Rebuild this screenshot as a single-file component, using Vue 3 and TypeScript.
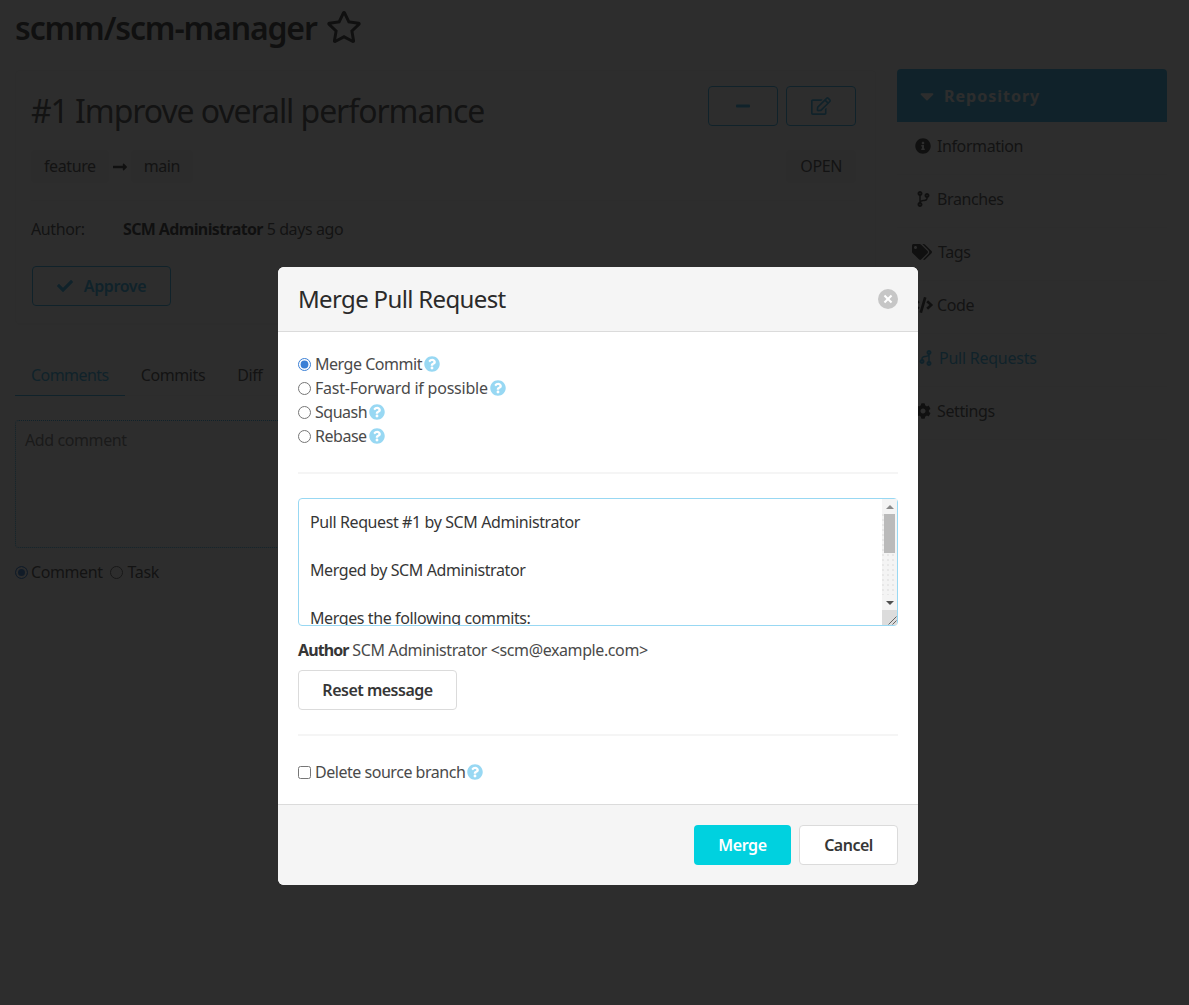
<script setup lang="ts">
const icons: Record<string, [number, string]> = {
  star: [576, "M528.1 171.5L382 150.2 316.7 17.8c-11.7-23.6-45.6-23.9-57.4 0L194 150.2 47.9 171.5c-26.2 3.8-36.7 36.1-17.7 54.6l105.7 103-25 145.5c-4.5 26.3 23.2 46 46.4 33.7L288 439.6l130.7 68.7c23.2 12.2 50.9-7.4 46.4-33.7l-25-145.5 105.7-103c19-18.5 8.5-50.8-17.7-54.6zM388.6 312.3l23.7 138.4L288 385.4l-124.3 65.3 23.7-138.4-100.6-98 139-20.2 62.2-126 62.2 126 139 20.2-100.6 98z"],
  check: [512, "M173.898 439.404l-166.4-166.4c-9.997-9.997-9.997-26.206 0-36.204l36.203-36.204c9.997-9.998 26.207-9.998 36.204 0L192 312.69 432.095 72.596c9.997-9.997 26.207-9.997 36.204 0l36.203 36.204c9.997 9.997 9.997 26.206 0 36.204l-294.4 294.401c-9.998 9.997-26.207 9.997-36.204-.001z"],
  minus: [448, "M416 208H32c-17.67 0-32 14.33-32 32v32c0 17.67 14.33 32 32 32h384c17.67 0 32-14.33 32-32v-32c0-17.67-14.33-32-32-32z"],
  edit: [576, "M402.3 344.9l32-32c5-5 13.7-1.5 13.7 5.7V464c0 26.5-21.5 48-48 48H48c-26.5 0-48-21.5-48-48V112c0-26.5 21.5-48 48-48h273.5c7.1 0 10.7 8.6 5.7 13.7l-32 32c-1.5 1.5-3.5 2.3-5.7 2.3H48v352h352V350.5c0-2.1.8-4.1 2.3-5.6zm156.6-201.8L296.3 405.7l-90.4 10c-26.2 2.9-48.5-19.2-45.6-45.6l10-90.4L432.9 17.1c22.9-22.9 59.9-22.9 82.7 0l43.2 43.2c22.9 22.9 22.9 60 .1 82.8zM460.1 174L402 115.9 216.2 301.8l-7.3 65.3 65.3-7.3L460.1 174zm64.8-79.7l-43.2-43.2c-4.1-4.1-10.8-4.1-14.8 0L436 82l58.1 58.1 30.9-30.9c4-4.2 4-10.8-.1-14.9z"],
  caret: [320, "M31.3 192h257.3c17.8 0 26.7 21.5 14.1 34.1L174.1 354.8c-7.8 7.8-20.5 7.8-28.3 0L17.2 226.1C4.6 213.5 13.5 192 31.3 192z"],
  info: [512, "M256 8C119.043 8 8 119.083 8 256c0 136.997 111.043 248 248 248s248-111.003 248-248C504 119.083 392.957 8 256 8zm0 110c23.196 0 42 18.804 42 42s-18.804 42-42 42-42-18.804-42-42 18.804-42 42-42zm56 254c0 6.627-5.373 12-12 12h-88c-6.627 0-12-5.373-12-12v-24c0-6.627 5.373-12 12-12h12v-64h-12c-6.627 0-12-5.373-12-12v-24c0-6.627 5.373-12 12-12h64c6.627 0 12 5.373 12 12v100h12c6.627 0 12 5.373 12 12v24z"],
  branch: [384, "M384 144c0-44.2-35.8-80-80-80s-80 35.8-80 80c0 36.4 24.3 67.1 57.5 76.8-.6 16.1-4.2 28.5-11 36.9-15.4 19.2-49.3 22.4-85.2 25.7-28.2 2.6-57.4 5.4-81.3 16.9v-144c32.5-10.2 56-40.5 56-76.3 0-44.2-35.8-80-80-80S0 35.8 0 80c0 35.8 23.5 66.1 56 76.3v199.3C23.5 365.9 0 396.2 0 432c0 44.2 35.8 80 80 80s80-35.8 80-80c0-34-21.2-63.1-51.2-74.6 3.1-5.2 7.8-9.8 14.9-13.4 16.2-8.2 40.4-10.4 66.1-12.8 42.2-3.9 90-8.4 118.2-43.4 14-17.4 21.1-39.8 21.6-67.9 31.6-10.8 54.4-40.7 54.4-75.9zM80 64c8.8 0 16 7.2 16 16s-7.2 16-16 16-16-7.2-16-16 7.2-16 16-16zm0 384c-8.8 0-16-7.2-16-16s7.2-16 16-16 16 7.2 16 16-7.2 16-16 16zm224-320c8.8 0 16 7.2 16 16s-7.2 16-16 16-16-7.2-16-16 7.2-16 16-16z"],
  tags: [640, "M497.941 225.941L286.059 14.059A48 48 0 0 0 252.118 0H48C21.49 0 0 21.49 0 48v204.118a48 48 0 0 0 14.059 33.941l211.882 211.882c18.744 18.745 49.136 18.746 67.882 0l204.118-204.118c18.745-18.745 18.745-49.137 0-67.882zM112 160c-26.51 0-48-21.49-48-48s21.49-48 48-48 48 21.49 48 48-21.49 48-48 48zm513.941 133.823L421.823 497.941c-18.745 18.745-49.137 18.745-67.882 0l-.36-.36L527.64 323.522c16.999-16.999 26.36-39.6 26.36-63.64s-9.362-46.641-26.36-63.64L331.397 0h48.721a48 48 0 0 1 33.941 14.059l211.882 211.882c18.745 18.745 18.745 49.137 0 67.882z"],
  code: [640, "M278.9 511.5l-61-17.7c-6.4-1.8-10-8.5-8.2-14.9L346.2 8.7c1.8-6.4 8.5-10 14.9-8.2l61 17.7c6.4 1.8 10 8.5 8.2 14.9L293.8 503.3c-1.9 6.4-8.5 10.1-14.9 8.2zm-114-112.2l43.5-46.4c4.6-4.9 4.3-12.7-.8-17.2L117 256l90.6-79.7c5.1-4.5 5.5-12.3.8-17.2l-43.5-46.4c-4.5-4.8-12.1-5.1-17-.5L3.8 247.2c-5.1 4.7-5.1 12.8 0 17.5l144.1 135.1c4.9 4.6 12.5 4.4 17-.5zm327.2.6l144.1-135.1c5.1-4.7 5.1-12.8 0-17.5L492.1 112.1c-4.8-4.5-12.4-4.3-17 .5L431.6 159c-4.6 4.9-4.3 12.7.8 17.2L523 256l-90.6 79.7c-5.1 4.5-5.5 12.3-.8 17.2l43.5 46.4c4.5 4.9 12.1 5.1 17 .6z"],
  cog: [512, "M487.4 315.7l-42.6-24.6c4.3-23.2 4.3-47 0-70.2l42.6-24.6c4.9-2.8 7.1-8.6 5.5-14-11.1-35.6-30-67.8-54.7-94.6-3.8-4.1-10-5.1-14.8-2.3L380.8 110c-17.9-15.4-38.5-27.3-60.8-35.1V25.8c0-5.6-3.9-10.5-9.4-11.7-36.7-8.2-74.3-7.8-109.2 0-5.5 1.2-9.4 6.1-9.4 11.7V75c-22.2 7.9-42.8 19.8-60.8 35.1L88.7 85.5c-4.9-2.8-11-1.9-14.8 2.3-24.7 26.7-43.6 58.9-54.7 94.6-1.7 5.4.6 11.2 5.5 14L67.3 221c-4.3 23.2-4.3 47 0 70.2l-42.6 24.6c-4.9 2.8-7.1 8.6-5.5 14 11.1 35.6 30 67.8 54.7 94.6 3.8 4.1 10 5.1 14.8 2.3l42.6-24.6c17.9 15.4 38.5 27.3 60.8 35.1v49.2c0 5.6 3.9 10.5 9.4 11.7 36.7 8.2 74.3 7.8 109.2 0 5.5-1.2 9.4-6.1 9.4-11.7v-49.2c22.2-7.9 42.8-19.8 60.8-35.1l42.6 24.6c4.9 2.8 11 1.9 14.8-2.3 24.7-26.7 43.6-58.9 54.7-94.6 1.5-5.5-.7-11.3-5.6-14.1zM256 336c-44.1 0-80-35.9-80-80s35.9-80 80-80 80 35.9 80 80-35.9 80-80 80z"],
  help: [512, "M504 256c0 136.997-111.043 248-248 248S8 392.997 8 256C8 119.083 119.043 8 256 8s248 111.083 248 248zM262.655 90c-54.497 0-89.255 22.957-116.549 63.758-3.536 5.286-2.353 12.415 2.715 16.258l34.699 26.31c5.205 3.947 12.621 3.008 16.665-2.122 17.864-22.658 30.113-35.797 57.303-35.797 20.429 0 45.698 13.148 45.698 32.958 0 14.976-12.363 22.667-32.534 33.976C247.128 238.528 216 254.941 216 296v4c0 6.627 5.373 12 12 12h56c6.627 0 12-5.373 12-12v-1.333c0-28.462 83.186-29.647 83.186-106.667 0-58.002-60.165-102-116.531-102zM256 338c-25.365 0-46 20.635-46 46 0 25.364 20.635 46 46 46s46-20.636 46-46c0-25.365-20.635-46-46-46z"],
  arrow: [448, "M313.941 216H12c-6.627 0-12 5.373-12 12v56c0 6.627 5.373 12 12 12h301.941v46.059c0 21.382 25.851 32.09 40.971 16.971l86.059-86.059c9.373-9.373 9.373-24.569 0-33.941l-86.059-86.059c-15.119-15.119-40.971-4.411-40.971 16.971V216z"],
};

const navItems = [
  { label: "Information", icon: "info", cls: "" },
  { label: "Branches", icon: "branch", cls: "" },
  { label: "Tags", icon: "tags", cls: "" },
  { label: "Code", icon: "code", cls: "" },
  { label: "Pull Requests", icon: "branch", cls: "nav-active" },
  { label: "Settings", icon: "cog", cls: "" },
];
const strategies = ["Merge Commit", "Fast-Forward if possible", "Squash", "Rebase"];
const message = "Pull Request #1 by SCM Administrator\n\nMerged by SCM Administrator\n\nMerges the following commits:\n\ncommit 1\ncommit 2\ncommit 3\ncommit 4\n";
</script>

<template>
  <div class="page">
    <h1 class="repo-title">
      <span>scmm/scm-manager</span>
      <svg class="star" :viewBox="`0 0 ${icons.star[0]} 512`"><path :d="icons.star[1]" /></svg>
    </h1>
    <div class="columns">
      <main class="main">
        <section class="card">
          <div class="card-top">
            <h2 class="pr-title">#1 Improve overall performance</h2>
            <div class="icon-buttons">
              <button class="outline icon-btn"><svg class="ic16" :viewBox="`0 0 ${icons.minus[0]} 512`"><path :d="icons.minus[1]" /></svg></button>
              <button class="outline icon-btn"><svg class="ic18" :viewBox="`0 0 ${icons.edit[0]} 512`"><path :d="icons.edit[1]" /></svg></button>
            </div>
          </div>
          <div class="branch-row">
            <span class="tag">feature</span>
            <svg class="arrow" :viewBox="`0 0 ${icons.arrow[0]} 512`"><path :d="icons.arrow[1]" /></svg>
            <span class="tag">main</span>
            <span class="tag open">OPEN</span>
          </div>
          <div class="author-row">
            <span class="author-label">Author:</span>
            <span><strong>SCM Administrator</strong> 5 days ago</span>
          </div>
          <button class="outline approve">
            <svg class="ic16" :viewBox="`0 0 ${icons.check[0]} 512`"><path :d="icons.check[1]" /></svg>
            <span>Approve</span>
          </button>
        </section>
        <nav class="tabs">
          <span class="tab active">Comments</span>
          <span class="tab">Commits</span>
          <span class="tab">Diff</span>
        </nav>
        <div class="comment-box">Add comment</div>
        <div class="comment-type">
          <label><span class="bg-radio checked"></span>Comment</label>
          <label><span class="bg-radio"></span>Task</label>
        </div>
      </main>
      <aside class="side">
        <div class="side-head">
          <svg class="caret" :viewBox="`0 0 ${icons.caret[0]} 512`"><path :d="icons.caret[1]" /></svg>
          <span>Repository</span>
        </div>
        <div v-for="item in navItems" :key="item.label" class="side-item" :class="item.cls">
          <svg class="side-ic" :class="`ic-${item.icon}`" :viewBox="`0 0 ${icons[item.icon][0]} 512`"><path :d="icons[item.icon][1]" /></svg>
          <span>{{ item.label }}</span>
        </div>
      </aside>
    </div>

    <div class="overlay">
      <div class="modal">
        <header class="modal-head">
          <p class="modal-title">Merge Pull Request</p>
          <button class="close" aria-label="close"></button>
        </header>
        <div class="modal-body">
          <div class="strategies">
            <label v-for="(s, i) in strategies" :key="s" class="opt">
              <input type="radio" name="strategy" :checked="i === 0" />
              <span class="opt-text">{{ s }}</span>
              <svg class="help" viewBox="0 0 512 512"><path :d="icons.help[1]" /></svg>
            </label>
          </div>
          <hr class="rule first" />
          <div class="msg-wrap">
            <textarea class="msg" :value="message" readonly></textarea>
            <div class="fake-scroll">
              <div class="arrow-btn"><span class="tri up"></span></div>
              <div class="track"><div class="thumb"></div></div>
              <div class="arrow-btn"><span class="tri down"></span></div>
              <div class="grip">
                <svg viewBox="0 0 15 15" class="grip-lines"><path d="M6.5 14.5l8-8M10.5 14.5l4-4" /></svg>
              </div>
            </div>
          </div>
          <div class="author-line"><strong>Author</strong> SCM Administrator &lt;scm@example.com&gt;</div>
          <button class="plain reset">Reset message</button>
          <hr class="rule second" />
          <label class="opt">
            <input type="checkbox" />
            <span class="opt-text">Delete source branch</span>
            <svg class="help" viewBox="0 0 512 512"><path :d="icons.help[1]" /></svg>
          </label>
        </div>
        <footer class="modal-foot">
          <button class="merge">Merge</button>
          <button class="plain cancel">Cancel</button>
        </footer>
      </div>
    </div>
  </div>
</template>

<style>
html, body { margin: 0; background: #fff; }
</style>

<style scoped>
.page {
  position: relative;
  width: 1189px;
  height: 1005px;
  overflow: hidden;
  box-sizing: border-box;
  padding: 0 15px;
  font-family: "Noto Sans", "Open Sans", sans-serif;
  font-size: 16px;
  line-height: 24px;
  letter-spacing: -0.4px;
  color: #4a4a4a;
  background: #fff;
}
svg { fill: currentColor; display: block; flex: none; }
button { font-family: inherit; letter-spacing: inherit; cursor: pointer; }
.repo-title {
  margin: 0;
  height: 70px;
  padding-top: 8px;
  box-sizing: border-box;
  display: flex;
  align-items: flex-start;
  gap: 9px;
  font-size: 32px;
  line-height: 40px;
  font-weight: 600;
  letter-spacing: -1.15px;
  color: #363636;
}
.star { width: 36px; height: 32px; margin-top: 3px; }
.columns { display: flex; gap: 21px; align-items: flex-start; }
.main { width: 861px; flex: none; }
.card {
  box-sizing: border-box;
  height: 254px;
  border: 1px solid #f5f5f5;
  border-radius: 4px;
  padding: 15px 19px 0 15px;
  box-shadow: 0 1px 2px rgba(10,10,10,.04);
}
.card-top { display: flex; justify-content: space-between; align-items: flex-start; height: 43px; }
.pr-title { margin: 7px 0 0; font-size: 32px; line-height: 36px; font-weight: 400; letter-spacing: -1.08px; color: #4a4a4a; }
.icon-buttons { display: flex; gap: 8px; }
.outline {
  box-sizing: border-box;
  height: 40px;
  border: 1px solid #33b2e8;
  border-radius: 4px;
  background: #fff;
  color: #33b2e8;
  display: flex;
  align-items: center;
  justify-content: center;
}
.icon-btn { width: 70px; }
.ic16 { width: 16px; height: 16px; }
.ic18 { width: 20px; height: 18px; }
.branch-row { display: flex; align-items: center; margin-top: 21px; height: 33px; }
.tag {
  display: inline-block;
  background: #f5f5f5;
  border-radius: 4px;
  padding: 0 13px;
  line-height: 33px;
  height: 33px;
  font-size: 16px;
}
.arrow { width: 14px; height: 16px; margin: 0 4px; color: #363636; }
.open { margin-left: auto; padding: 0 14px; }
.author-row {
  display: flex;
  margin-top: 17px;
  padding-top: 16px;
  border-top: 1px solid #f5f5f5;
}
.author-label { width: 92px; flex: none; }
.author-row strong { color: #363636; font-weight: 700; letter-spacing: -0.63px; }
.approve {
  width: 139px;
  margin-top: 25px;
  margin-left: 1px;
  gap: 11px;
  font-size: 16px;
  font-weight: 600;
}
.tabs {
  display: flex;
  margin-top: 39px;
  border-bottom: 1px solid #f5f5f5;
  height: 32px;
}
.tab { padding: 0 16px; height: 32px; line-height: 24px; margin-bottom: -1px; }
.tab.active { color: #33b2e8; border-bottom: 1px solid #33b2e8; letter-spacing: -0.55px; }
.comment-box {
  box-sizing: border-box;
  margin-top: 24px;
  height: 128px;
  border: 1px dotted #33b2e8;
  border-radius: 4px;
  padding: 7px 9px;
  color: #7a7a7a;
}
.comment-type { display: flex; gap: 7px; margin-top: 12px; }
.comment-type label { display: flex; align-items: center; gap: 3px; }
.comment-type label + label { gap: 5px; }
.bg-radio {
  box-sizing: border-box;
  width: 13px;
  height: 13px;
  border-radius: 50%;
  border: 1px solid #666;
}
.bg-radio.checked { border-color: #3b82d6; background: #3b82d6; box-shadow: inset 0 0 0 2px #fff; }
.side { width: 270px; flex: none; margin-top: -1px; }
.side-head {
  display: flex;
  align-items: center;
  gap: 10px;
  height: 53px;
  box-sizing: border-box;
  padding-left: 23px;
  background: #33b2e8;
  border-radius: 4px 4px 0 0;
  color: #fff;
  font-weight: 700;
  letter-spacing: 1px;
  font-size: 16px;
}
.caret { width: 14px; height: 22px; }
.side-item {
  display: flex;
  align-items: center;
  height: 53px;
  box-sizing: border-box;
  padding: 0 0 4px 18px;
  gap: 6px;
  border-bottom: 1px solid #f5f5f5;
  color: #4a4a4a;
}
.side-ic { width: 16px; height: 16px; color: #363636; }
.ic-branch { width: 13px; margin: 0 1px 0 2px; }
.ic-tags { width: 20px; margin-left: -3px; margin-right: 0; }
.ic-code { width: 20px; margin-left: -2px; margin-right: -2px; }
.nav-active { color: #33b2e8; padding-left: 20px; letter-spacing: -0.25px; }
.nav-active .ic-branch { margin-right: 1px; color: #33b2e8; transform: rotate(180deg); }
.overlay {
  position: absolute;
  inset: 0;
  background: rgba(10, 10, 10, 0.86);
  padding: 267px 0 0 278px;
  box-sizing: border-box;
}
.modal {
  width: 640px;
  height: 618px;
  display: flex;
  flex-direction: column;
  border-radius: 6px;
  overflow: hidden;
  background: #fff;
}
.modal-head {
  box-sizing: border-box;
  height: 65px;
  display: flex;
  align-items: center;
  justify-content: space-between;
  padding: 0 20px;
  background: #f5f5f5;
  border-bottom: 1px solid #dbdbdb;
}
.modal-title { margin: 0; font-size: 24px; line-height: 30px; letter-spacing: -0.65px; color: #2a2a2a; }
.close {
  position: relative;
  width: 20px;
  height: 20px;
  padding: 0;
  border: 0;
  border-radius: 50%;
  background: #c6c6c6;
}
.close::before, .close::after {
  content: "";
  position: absolute;
  left: 5px;
  top: 9px;
  width: 10px;
  height: 2px;
  background: #fff;
  transform: rotate(45deg);
}
.close::after { transform: rotate(-45deg); }
.modal-body { flex: 1; padding: 20px; box-sizing: border-box; }
.strategies { display: flex; flex-direction: column; }
.opt { display: flex; align-items: center; height: 24px; }
.opt input { margin: 0 4px 0 0; width: 13px; height: 13px; flex: none; accent-color: #3a7fd5; }
.opt:nth-child(2) .opt-text { letter-spacing: -0.22px; }
.opt .opt-text { letter-spacing: -0.47px; }
.help { width: 16px; height: 16px; color: #98d8f3; margin-left: 2px; }
.rule { border: 0; height: 2px; background: #f5f5f5; margin: 0; }
.rule.first { margin: 24px 0; }
.rule.second { margin: 24px 0 24px; }
.msg-wrap { position: relative; height: 128px; }
.msg {
  display: block;
  box-sizing: border-box;
  width: 100%;
  height: 128px;
  padding: 11px;
  border: 1px solid #98d8f3;
  border-radius: 4px;
  outline: none;
  overflow: hidden;
  resize: none;
  font-family: inherit;
  font-size: 16px;
  line-height: 24px;
  letter-spacing: inherit;
  color: #363636;
  background: #fff;
}
.fake-scroll {
  position: absolute;
  top: 1px;
  right: 1px;
  bottom: 1px;
  width: 15px;
  display: flex;
  flex-direction: column;
  background: #f4f4f4;
}
.arrow-btn { height: 15px; flex: none; display: flex; align-items: center; justify-content: center; }
.tri { width: 0; height: 0; border-left: 4px solid transparent; border-right: 4px solid transparent; }
.tri.up { border-bottom: 4px solid #8a8a8a; }
.tri.down { border-top: 4px solid #505050; }
.track {
  flex: 1;
  background-image: radial-gradient(circle at 1px 1px, #d8d8d8 0.6px, transparent 0.8px);
  background-size: 5px 5px;
}
.thumb { width: 11px; height: 39px; margin-left: 2px; background: #bababa; }
.grip { height: 15px; flex: none; background: #dcdcdc; }
.grip-lines { width: 15px; height: 15px; fill: none; stroke: #666; stroke-width: 1; }
.author-line { margin-top: 12px; height: 24px; }
.author-line strong { color: #363636; font-weight: 700; letter-spacing: -0.9px; }
.plain {
  box-sizing: border-box;
  height: 40px;
  border: 1px solid #dbdbdb;
  border-radius: 4px;
  background: #fff;
  color: #363636;
  font-size: 16px;
  font-weight: 600;
  letter-spacing: -0.5px;
}
.reset { display: block; width: 159px; margin-top: 8px; }
.modal-foot {
  box-sizing: border-box;
  height: 81px;
  display: flex;
  justify-content: flex-end;
  align-items: center;
  gap: 8px;
  padding: 0 20px;
  background: #f5f5f5;
  border-top: 1px solid #dbdbdb;
}
.merge {
  box-sizing: border-box;
  width: 97px;
  height: 40px;
  border: 0;
  border-radius: 4px;
  background: #00d1df;
  color: #fff;
  font-size: 16px;
  font-weight: 600;
}
.cancel { width: 99px; }
</style>
